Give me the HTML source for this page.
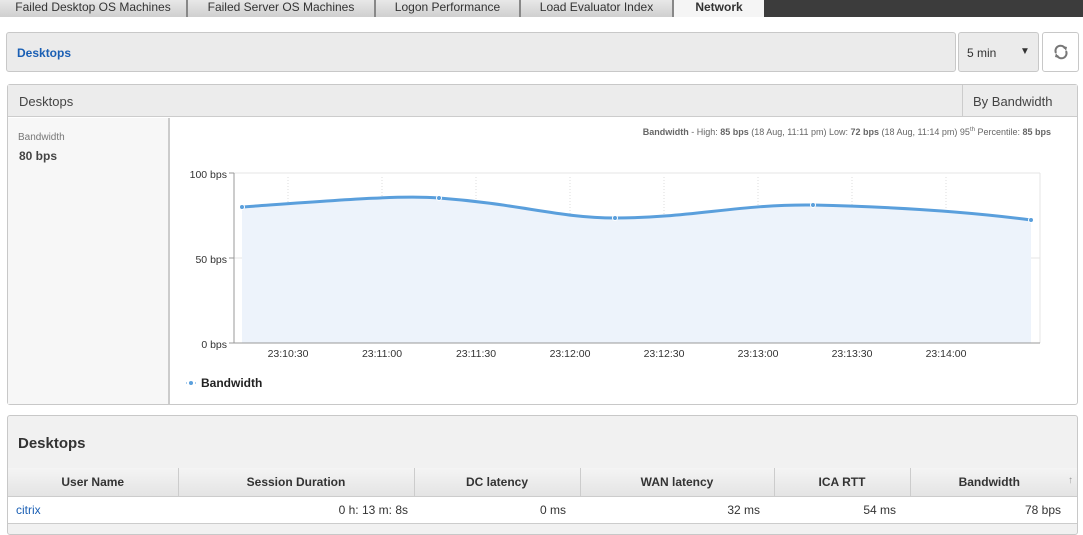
<!DOCTYPE html>
<html><head><style>
*{box-sizing:border-box;margin:0;padding:0}
body{width:1083px;height:527px;overflow:hidden;background:#fff;font-family:"Liberation Sans",sans-serif;position:relative;color:#333}
.abs{position:absolute}
.tabbar{left:0;top:0;width:1083px;height:17px;background:#3c3c3c}
.tab{position:absolute;top:0;height:17px;background:linear-gradient(#e8e8e8,#cfcfcf);border-right:2px solid #888;font-size:12px;text-align:center;line-height:15px;color:#333}
.box{position:absolute;border:1px solid #c8c8c8;border-radius:3px;background:#ebebeb}
th{font-weight:bold;font-size:12px;color:#333;border-right:1px solid #ccc;height:28px;background:linear-gradient(#f4f4f4,#e4e4e4)}
</style></head><body>
<div class="abs tabbar"></div>
<div class="tab" style="left:0;width:188px">Failed Desktop OS Machines</div>
<div class="tab" style="left:188px;width:188px">Failed Server OS Machines</div>
<div class="tab" style="left:376px;width:145px">Logon Performance</div>
<div class="tab" style="left:521px;width:153px">Load Evaluator Index</div>
<div class="tab" style="left:674px;width:90px;background:#f5f5f5;font-weight:bold;border:none">Network</div>

<div class="box" style="left:6px;top:32px;width:950px;height:40px"><span class="abs" style="left:10px;top:13px;font-size:12px;font-weight:bold;color:#1a5fb4">Desktops</span></div>
<div class="box" style="left:958px;top:32px;width:81px;height:40px"><span class="abs" style="left:8px;top:13px;font-size:12px">5 min</span><span class="abs" style="left:61px;top:13px;font-size:10px">▼</span></div>
<div class="box" style="left:1042px;top:32px;width:37px;height:40px;background:#fff">
<svg class="abs" style="left:10px;top:11px" width="16" height="16" viewBox="0 0 16 16"><path d="M3 9A5 5 0 0 1 12 4.5M13 7A5 5 0 0 1 4 11.5" fill="none" stroke="#777" stroke-width="2"/><path d="M10 2l4 1-1 4z M6 14l-4-1 1-4z" fill="#777"/></svg></div>

<div class="box" style="left:7px;top:84px;width:1071px;height:321px;background:#fff">
 <div class="abs" style="left:0;top:0;width:1069px;height:32px;background:#ececec;border-bottom:1px solid #ccc"></div>
 <span class="abs" style="left:11px;top:9px;font-size:13px;color:#444">Desktops</span>
 <div class="abs" style="left:954px;top:0;width:115px;height:32px;border-left:1px solid #ccc"></div>
 <span class="abs" style="left:965px;top:9px;font-size:13px;color:#444">By Bandwidth</span>
 <div class="abs" style="left:0;top:33px;width:162px;height:286px;background:#f7f7f7;border-right:2px solid #ccc"></div>
 <span class="abs" style="left:10px;top:47px;font-size:10px;color:#777">Bandwidth</span>
 <span class="abs" style="left:11px;top:64px;font-size:12px;font-weight:bold;color:#444">80 bps</span>
 <span class="abs" style="right:26px;top:42px;font-size:9px;color:#666;white-space:nowrap"><b>Bandwidth</b> - High: <b>85 bps</b> (18 Aug, 11:11 pm) Low: <b>72 bps</b> (18 Aug, 11:14 pm) 95<sup style="font-size:6px">th</sup> Percentile: <b>85 bps</b></span>
</div>

<svg class="abs" style="left:0;top:0" width="1083" height="400">
<g stroke="#e4e4e4"><line x1="234" y1="173" x2="1040" y2="173"/><line x1="234" y1="258" x2="1040" y2="258"/><line x1="1040" y1="173" x2="1040" y2="343"/></g>
<g stroke="#ddd" stroke-dasharray="1,2"><line x1="288" y1="177" x2="288" y2="343"/><line x1="382" y1="177" x2="382" y2="343"/><line x1="476" y1="177" x2="476" y2="343"/><line x1="570" y1="177" x2="570" y2="343"/><line x1="664" y1="177" x2="664" y2="343"/><line x1="758" y1="177" x2="758" y2="343"/><line x1="852" y1="177" x2="852" y2="343"/><line x1="946" y1="177" x2="946" y2="343"/></g>
<path d="M242 207C340 200 400 195 439 198C520 204 560 218 615 218C690 218 740 204 813 205C900 207 970 212 1031 220L1031 343L242 343Z" fill="#edf3fb"/>
<path d="M242 207C340 200 400 195 439 198C520 204 560 218 615 218C690 218 740 204 813 205C900 207 970 212 1031 220" fill="none" stroke="#5a9fdc" stroke-width="3"/>
<g fill="#5a9fdc" stroke="#fff"><circle cx="242" cy="207" r="2.5"/><circle cx="439" cy="198" r="2.5"/><circle cx="615" cy="218" r="2.5"/><circle cx="813" cy="205" r="2.5"/><circle cx="1031" cy="220" r="2.5"/></g>
<g stroke="#999"><line x1="234" y1="173" x2="234" y2="343"/><line x1="234" y1="343" x2="1040" y2="343"/><line x1="229" y1="173" x2="234" y2="173"/><line x1="229" y1="258" x2="234" y2="258"/><line x1="229" y1="343" x2="234" y2="343"/></g>
<g font-size="10.5" fill="#333" font-family="Liberation Sans" text-anchor="end"><text x="227" y="178">100 bps</text><text x="227" y="263">50 bps</text><text x="227" y="348">0 bps</text></g>
<g font-size="10.5" fill="#333" font-family="Liberation Sans" text-anchor="middle"><text x="288" y="357">23:10:30</text><text x="382" y="357">23:11:00</text><text x="476" y="357">23:11:30</text><text x="570" y="357">23:12:00</text><text x="664" y="357">23:12:30</text><text x="758" y="357">23:13:00</text><text x="852" y="357">23:13:30</text><text x="946" y="357">23:14:00</text></g>
<circle cx="191" cy="383" r="2" fill="#5a9fdc"/><line x1="186" y1="383" x2="196" y2="383" stroke="#5a9fdc" stroke-dasharray="1,2"/>
<text x="201" y="387" font-size="12" font-weight="bold" fill="#222" font-family="Liberation Sans">Bandwidth</text>
</svg>

<div class="box" style="left:7px;top:415px;width:1071px;height:120px;background:#f1f1f1">
 <span class="abs" style="left:10px;top:19px;font-size:15px;font-weight:bold;color:#333">Desktops</span>
 <table class="abs" style="left:0;top:52px;width:1069px;border-collapse:collapse;background:#fff">
  <tr><th style="width:170px">User Name</th><th style="width:236px">Session Duration</th><th style="width:166px">DC latency</th><th style="width:194px">WAN latency</th><th style="width:136px">ICA RTT</th><th style="border:none">Bandwidth <span style="float:right;color:#999;font-size:10px;margin-right:4px">↑</span></th></tr>
  <tr style="font-size:12px;height:27px;border-top:1px solid #ccc;border-bottom:1px solid #ccc"><td style="padding-left:8px;color:#1a5fb4">citrix</td><td style="text-align:right;padding-right:6px">0 h: 13 m: 8s</td><td style="text-align:right;padding-right:14px">0 ms</td><td style="text-align:right;padding-right:14px">32 ms</td><td style="text-align:right;padding-right:14px">54 ms</td><td style="text-align:right;padding-right:16px">78 bps</td></tr>
 </table>
</div>
</body></html>
